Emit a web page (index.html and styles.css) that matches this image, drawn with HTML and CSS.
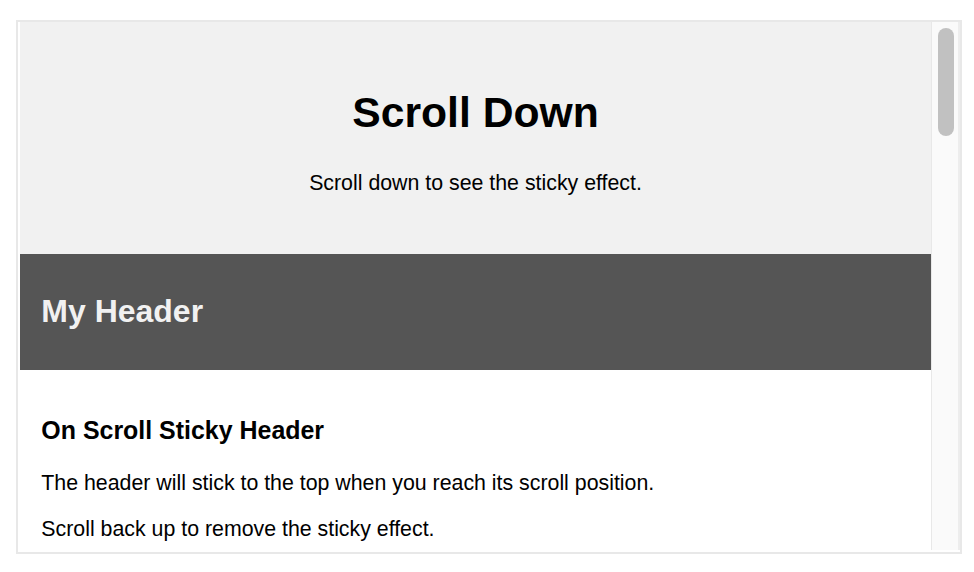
FILE: index.html
```html
<!DOCTYPE html>
<html lang="en">

<head>
    <meta charset="UTF-8">
    <meta name="viewport" content="width=device-width, initial-scale=1.0">
    <title>Sticky Header</title>
    <link rel="stylesheet" href="styles.css">
</head>

<body>
    <div class="frame">
        <div class="page">
            <div class="top-container">
                <h1>Scroll Down</h1>
                <p>Scroll down to see the sticky effect.</p>
            </div>

            <div class="header" id="myHeader">
                <h2>My Header</h2>
            </div>

            <div class="content">
                <h3>On Scroll Sticky Header</h3>
                <p>The header will stick to the top when you reach its scroll position.</p>
                <p>Scroll back up to remove the sticky effect.</p>
            </div>
        </div>

        <!-- scrollbar drawn by hand, headless chrome hides the real one -->
        <div class="scrollbar">
            <div class="thumb"></div>
        </div>
    </div>
</body>

</html>
```

FILE: styles.css
```css
body {
    margin: 0;
    background: #ffffff;
    font-family: 'Liberation Sans', Arial, sans-serif;
}

.frame {
    box-sizing: border-box;
    display: flex;
    width: 946px;
    height: 534px;
    margin: 20px 0 0 16px;
    border: 2px solid #e8e8e8;
    padding: 0 0 2px 2px;
    background: #ffffff;
}

.page {
    flex: 1;
    min-width: 0;
    overflow: hidden;
    font-size: 21.333px;
    color: #000;
}

.scrollbar {
    box-sizing: border-box;
    flex: none;
    width: 29px;
    padding: 6px 4px 0 6px;
    background: #fafafa;
    border-left: 1px solid #e8e8e8;
    border-right: 2px solid #ededed;
}

.thumb {
    height: 108px;
    border-radius: 8px;
    background: #c1c1c1;
}

.top-container {
    background-color: #f1f1f1;
    padding: 40px;
    text-align: center;
}

.top-container h1 {
    font-size: 2em;
    margin: 0.62em 0 0.79em;
}

.top-container p {
    margin: 0 0 0.86em;
}

.header {
    padding: 13.333px 21.333px;
    background: #555;
    color: #f1f1f1;
}

.header h2 {
    font-size: 1.5em;
    margin: 0.8em 0 0.83em;
}

.content {
    padding: 21.333px;
}

.content h3 {
    font-size: 1.17em;
    margin: 0.96em 0 1em;
}

.content p {
    margin: 1em 0;
}

.content h3 + p {
    margin-top: 1.24em;
}

.content p + p {
    margin-top: 0.76em;
}
```
